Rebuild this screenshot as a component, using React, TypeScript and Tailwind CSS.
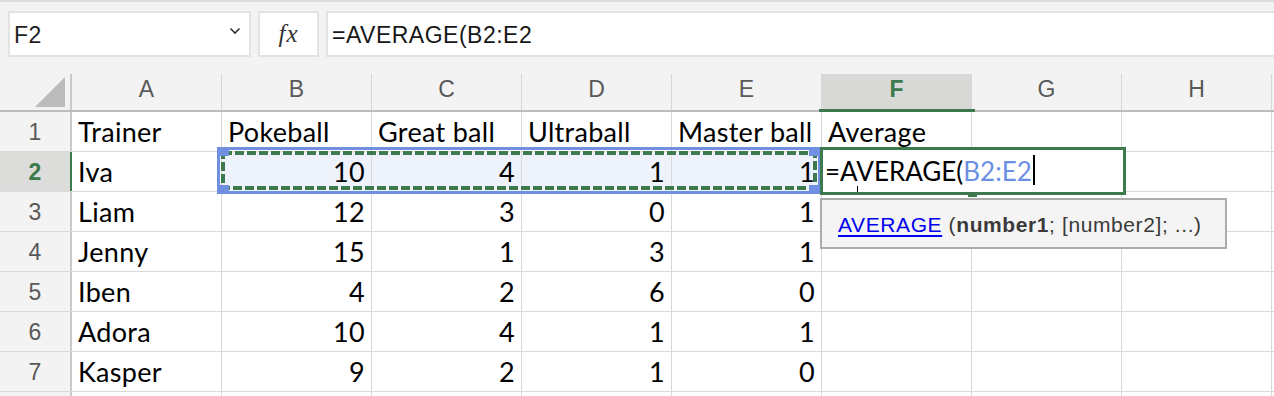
import React from 'react'

const columns = ['A', 'B', 'C', 'D', 'E', 'F', 'G', 'H']

// A..F values per row; numbers are right aligned like Excel does
const rows: (string | number)[][] = [
  ['Trainer', 'Pokeball', 'Great ball', 'Ultraball', 'Master ball', 'Average'],
  ['Iva', 10, 4, 1, 1, ''],
  ['Liam', 12, 3, 0, 1, ''],
  ['Jenny', 15, 1, 3, 1, ''],
  ['Iben', 4, 2, 6, 0, ''],
  ['Adora', 10, 4, 1, 1, ''],
  ['Kasper', 9, 2, 1, 0, ''],
]

function FormulaBar() {
  return (
    <div className="h-[74px] bg-[#f3f3f3] border-t-[2px] border-[#dcdcdc] flex items-start pt-[9px] pl-[8px] gap-[7px]">
      <div className="w-[243px] h-[46px] bg-white border-2 border-[#e3e3e3] flex items-center justify-between pl-[4px] pr-[8px]">
        <span className="text-[23px] text-[#1f1f1f] font-['Liberation_Sans',sans-serif] pt-[2px] tracking-[0.5px]">F2</span>
        <svg width="12" height="8" viewBox="0 0 12 8" className="mb-[6px]">
          <polyline points="1.5,1.5 6,6 10.5,1.5" fill="none" stroke="#333" strokeWidth="1.6" />
        </svg>
      </div>
      <div className="w-[61px] h-[46px] bg-white border-2 border-[#e3e3e3] flex items-center justify-center">
        <span className="text-[25px] italic text-[#333] font-['Liberation_Serif',serif] tracking-[1px]">fx</span>
      </div>
      <div className="flex-1 h-[46px] bg-white border-2 border-r-0 border-[#e3e3e3] flex items-center pl-[4px]">
        <span className="text-[23px] text-[#161616] font-['Liberation_Sans',sans-serif] pt-[3px] tracking-[0.5px]">=AVERAGE(B2:E2</span>
      </div>
    </div>
  )
}

function HeaderRow() {
  return (
    <div className="h-[38px] flex bg-[#f3f3f3] border-b-2 border-[#bcbcbc] font-['Liberation_Sans',sans-serif]">
      <div className="w-[72px] shrink-0 border-r-2 border-[#c9c9c9] flex items-end justify-end pr-[5px] pb-[3px]">
        <svg width="30" height="30" viewBox="0 0 30 30">
          <polygon points="30,0 30,30 0,30" fill="#bcbcbc" />
        </svg>
      </div>
      {columns.map(col => {
        const active = col === 'F'
        return (
          <div
            key={col}
            className={`w-[150px] shrink-0 border-r border-[#d6d6d6] flex items-center justify-center pb-[5px] text-[23px] ${
              active ? 'bg-[#d8d8d6] text-[#3b7a4c] font-bold' : 'text-[#595959]'
            }`}
          >
            {col}
          </div>
        )
      })}
    </div>
  )
}

function DataRow({ index, values }: { index: number; values: (string | number)[] }) {
  const selected = index === 2
  return (
    <div className="h-[40px] flex border-b border-[#d9d9d9]">
      <div
        className={`w-[72px] shrink-0 border-r-2 flex items-center justify-center pt-[2px] text-[23px] font-['Liberation_Sans',sans-serif] ${
          selected
            ? 'bg-[#dcdcdb] border-[#3b7a4c] text-[#3b7a4c] font-bold'
            : 'bg-[#f3f3f3] border-[#c9c9c9] text-[#595959]'
        }`}
      >
        {index}
      </div>
      {columns.map((col, i) => {
        const value = values[i] ?? ''
        const isNumber = typeof value === 'number'
        const inRange = selected && i >= 1 && i <= 4
        return (
          <div
            key={col}
            className={`w-[150px] shrink-0 border-r border-[#d9d9d9] flex items-end pb-[4px] px-[6px] text-[27px] leading-[30px] tracking-[0.3px] text-black whitespace-nowrap ${
              isNumber ? 'justify-end' : 'justify-start'
            } ${inRange ? 'bg-[#eef2fb]' : ''}`}
          >
            {value}
          </div>
        )
      })}
    </div>
  )
}

function RangeSelection() {
  // B2:E2 reference highlight: blue frame with the marching ants inside
  return (
    <div className="absolute left-[217px] top-[73px] w-[604px] h-[47px] border-[3px] border-[#6f90e0]">
      <svg className="absolute left-0 top-0" width="598" height="41" viewBox="0 0 598 41">
        <rect x="3" y="3" width="592" height="35" fill="none" stroke="#3c7a4d" strokeWidth="4" strokeDasharray="9 3" />
      </svg>
      <div className="absolute -left-[3px] -top-[3px] w-[12px] h-[9px] bg-[#6f90e0]" />
      <div className="absolute -right-[3px] -top-[3px] w-[12px] h-[9px] bg-[#6f90e0]" />
      <div className="absolute -left-[3px] -bottom-[3px] w-[12px] h-[9px] bg-[#6f90e0]" />
      <div className="absolute -right-[3px] -bottom-[3px] w-[12px] h-[9px] bg-[#6f90e0]" />
    </div>
  )
}

function ActiveCell() {
  return (
    <>
      <div className="absolute left-[820px] top-[73px] w-[306px] h-[48px] border-[3px] border-[#3c7a4d] bg-white flex items-end pl-[2px] pb-[6px]">
        <span className="text-[26px] leading-[30px] text-black whitespace-nowrap">
          =AVERAGE(<span className="text-[#6b8fe3]">B2:E2</span>
        </span>
        <span className="w-[2px] h-[30px] bg-black ml-[1px] mb-[1px]" />
      </div>
      <div className="absolute left-[857px] top-[112px] w-[1px] h-[6px] bg-black" />
      <div className="absolute left-[968px] top-[118px] w-[9px] h-[5px] bg-[#3c7a4d]" />
    </>
  )
}

function FunctionTooltip() {
  return (
    <div className="absolute left-[820px] top-[124px] w-[407px] h-[51px] bg-[#f4f4f4] border-2 border-[#acacac] flex items-center pl-[16px] pt-[2px] text-[21px] tracking-[0.6px] text-[#3a3a3a] font-['Liberation_Sans',sans-serif] whitespace-nowrap">
      <span className="text-[#0000ee] underline underline-offset-[3px]">AVERAGE</span>
      <span>&nbsp;(</span>
      <span className="font-bold">number1</span>
      <span>; [number2]; ...)</span>
    </div>
  )
}

export default function App() {
  return (
    <div className="w-[1274px] h-[396px] overflow-hidden bg-white font-['Lato','Liberation_Sans',sans-serif]">
      <FormulaBar />
      <div className="relative">
        <HeaderRow />
        {rows.map((values, i) => (
          <DataRow key={i} index={i + 1} values={values} />
        ))}
        <div className="h-[40px] flex">
          <div className="w-[72px] shrink-0 border-r-2 border-[#c9c9c9] bg-[#f3f3f3]" />
          {columns.map(col => (
            <div key={col} className="w-[150px] shrink-0 border-r border-[#d9d9d9]" />
          ))}
        </div>
        <RangeSelection />
        <ActiveCell />
        <FunctionTooltip />
        <div className="absolute left-[819px] top-[35px] w-[156px] h-[3px] bg-[#3c7a4d]" />
      </div>
    </div>
  )
}
